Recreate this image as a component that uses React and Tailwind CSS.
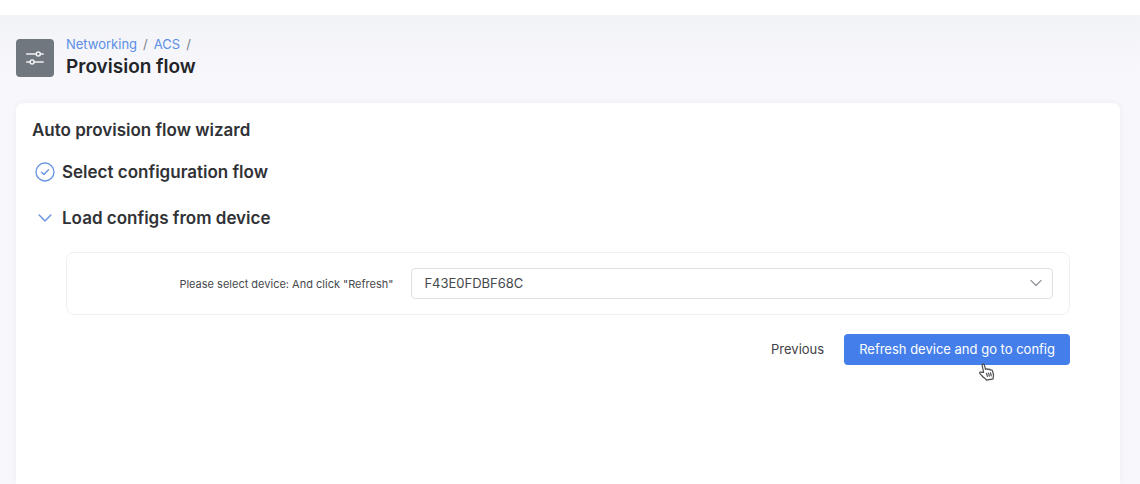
import React, { useState } from 'react';

const devices = ['F43E0FDBF68C'];

const SlidersIcon = () => (
  <svg className="h-5 w-5" viewBox="0 0 20 20" fill="none" stroke="currentColor" strokeWidth="1.5" strokeLinecap="round">
    <path d="M1.7 6h9.6M15.3 6h2.9M1.7 14h3.4M9.1 14h9.1" />
    <circle cx="13.3" cy="6" r="2" />
    <circle cx="7.1" cy="14" r="2" />
  </svg>
);

const CheckCircleIcon = () => (
  <svg className="h-5 w-5" viewBox="0 0 20 20" fill="none" stroke="currentColor" strokeWidth="1.4" strokeLinecap="round" strokeLinejoin="round">
    <circle cx="10" cy="10" r="9" />
    <path d="M6.5 10.2l2.4 2.3 4.6-4.7" />
  </svg>
);

const ChevronIcon = ({ className }) => (
  <svg className={className} viewBox="0 0 12 12" fill="none" stroke="currentColor" strokeWidth="1.3" strokeLinecap="round" strokeLinejoin="round">
    <path d="M1 3.5l5 5 5-5" />
  </svg>
);

const HandCursor = ({ className }) => (
  <svg className={className} viewBox="0 0 16 18" fill="#fff" stroke="#4a4c50" strokeWidth="1.2" strokeLinejoin="round" strokeLinecap="round">
    <path d="M4.6 9.4L3.2 2.6c-.3-1.6 1.8-2 2.2-.4L6.5 6.4c.5-.9 2.1-.8 2.3.2.6-.8 2.2-.5 2.4.5.8-.5 2.2-.1 2.4 1l.8 3.4c.4 1.9-.4 2.6-.3 4.4l-6.6 1.3c-.7-1.6-2.6-2.2-3.9-3.7L1 10.7c-.9-1.2.5-2.2 1.5-1.4z" />
    <path d="M7.6 10.4l.7 3M9.6 10.1l.7 3M11.6 9.8l.6 3" />
  </svg>
);

const Step = ({ icon, title }) => (
  <div className="flex items-center gap-[7px]">
    <span className="flex h-5 w-5 items-center justify-center text-[#6a96e2]">{icon}</span>
    <h3 className="text-[17px] leading-6 font-semibold">{title}</h3>
  </div>
);

const ProvisionFlow = () => {
  const [device, setDevice] = useState(devices[0]);

  return (
    <div className="flex min-h-screen flex-col bg-[#f7f7fc] font-['Inter',sans-serif] text-[#303236]">
      {/* Top bar */}
      <div className="h-[15px] bg-white" />

      <main className="flex flex-1 flex-col bg-linear-to-b from-[#f2f3f7] to-[#f7f7fc] to-[60px] pt-5 pr-5 pl-4">
        {/* Page header */}
        <header className="flex items-center gap-3 pb-[22px]">
          <div className="flex h-[38px] w-[38px] items-center justify-center rounded bg-[#70777f] text-[#f0f1f3]">
            <SlidersIcon />
          </div>
          <div>
            <nav aria-label="Breadcrumb" className="flex gap-[6px] text-[13px] leading-[18px] text-[#7d828a]">
              <a href="#networking" className="text-[#5b8ee6]">Networking</a>
              <span>/</span>
              <a href="#acs" className="text-[#5b8ee6]">ACS</a>
              <span>/</span>
            </nav>
            <h1 className="text-[19px] leading-[28px] font-semibold text-[#222428]">Provision flow</h1>
          </div>
        </header>

        {/* Wizard */}
        <section className="flex-1 rounded-t-lg bg-white px-4 pt-[15px] shadow-[0_0_6px_rgba(60,60,110,0.06)]">
          <h2 className="text-[17px] leading-6 font-semibold">Auto provision flow wizard</h2>

          <div className="mt-[18px] flex flex-col gap-[22px] pl-[3px]">
            <Step icon={<CheckCircleIcon />} title="Select configuration flow" />
            <Step icon={<ChevronIcon className="h-[14px] w-[14px]" />} title="Load configs from device" />
          </div>

          <div className="mx-[34px] mt-[22px]">
            <div className="flex items-center gap-[18px] rounded-lg border border-[#f0f0f2] px-4 py-[15px]">
              <label htmlFor="device" className="w-[32%] text-right text-[11px] leading-4 text-[#45484d]">
                Please select device: And click "Refresh"
              </label>
              <div className="relative flex-1">
                <select
                  id="device"
                  value={device}
                  onChange={(e) => setDevice(e.target.value)}
                  className="block h-[31px] w-full appearance-none rounded border border-[#dfe0e3] bg-white px-3 text-[13px] text-[#45484d]"
                >
                  {devices.map((name) => (
                    <option key={name} value={name}>{name}</option>
                  ))}
                </select>
                <ChevronIcon className="pointer-events-none absolute top-[9px] right-[11px] h-3 w-3 text-[#95979c]" />
              </div>
            </div>

            <div className="mt-[19px] flex items-center justify-end gap-2">
              <button type="button" className="h-[31px] px-3 text-[13px] text-[#3f4247]">Previous</button>
              <button type="button" className="relative h-[31px] rounded bg-[#447eea] px-[15px] text-[13px] text-white">
                Refresh device and go to config
                <HandCursor className="pointer-events-none absolute right-[75px] -bottom-4 h-[18px] w-4" />
              </button>
            </div>
          </div>
        </section>
      </main>
    </div>
  );
};

export default ProvisionFlow;
